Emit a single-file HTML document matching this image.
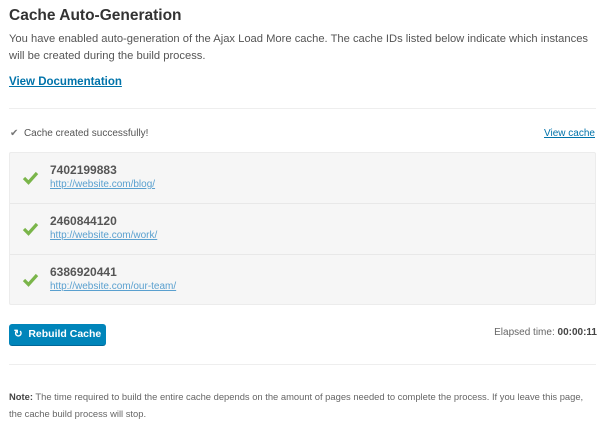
<!DOCTYPE html>
<html><head><style>
body{margin:0;width:606px;height:430px;background:#fff;font-family:"Liberation Sans",sans-serif;color:#444;position:relative;overflow:hidden}
.a{position:absolute;white-space:nowrap}
a{color:#0073aa;text-decoration:underline}
.box{position:absolute;left:9px;top:152px;width:587px;height:153px;background:#f6f6f6;border:1px solid #ececec;border-radius:2px;box-sizing:border-box}
.row{position:absolute;left:0;width:100%;height:51px;border-bottom:1px solid #e8e8e8;box-sizing:border-box}
.row .id{position:absolute;left:40px;top:10px;font-size:12px;font-weight:bold;color:#555}
.row .u{position:absolute;left:40px;top:26px;font-size:10px;color:#5aa0cf}
.row svg{position:absolute;left:12px;top:18px}
hr{position:absolute;left:9px;width:587px;border:0;border-top:1px solid #eee;margin:0}
</style></head><body>
<div class="a" style="left:9px;top:7px;font-size:15.5px;font-weight:bold;color:#333">Cache Auto-Generation</div>
<div class="a" style="left:9px;top:31px;font-size:11.2px;line-height:17px;color:#555">You have enabled auto-generation of the Ajax Load More cache. The cache IDs listed below indicate which instances<br>will be created during the build process.</div>
<div class="a" style="left:9px;top:76px;font-size:11.5px;font-weight:bold"><a>View Documentation</a></div>
<hr style="top:108px">
<div class="a" style="left:10px;top:128px;font-size:10px;color:#555"><span style="color:#777">✔</span>&nbsp; Cache created successfully!</div>
<div class="a" style="right:11px;top:128px;font-size:10px"><a>View cache</a></div>
<div class="box">
<div class="row" style="top:0"><svg width="17" height="14" viewBox="0 0 17 14"><path d="M2 7l4.5 4.5L15 2" fill="none" stroke="#7ab54a" stroke-width="3.2"/></svg><div class="id">7402199883</div><div class="u"><a style="color:#5aa0cf">http://website.com/blog/</a></div></div>
<div class="row" style="top:51px"><svg width="17" height="14" viewBox="0 0 17 14"><path d="M2 7l4.5 4.5L15 2" fill="none" stroke="#7ab54a" stroke-width="3.2"/></svg><div class="id">2460844120</div><div class="u"><a style="color:#5aa0cf">http://website.com/work/</a></div></div>
<div class="row" style="top:102px;border:0"><svg width="17" height="14" viewBox="0 0 17 14"><path d="M2 7l4.5 4.5L15 2" fill="none" stroke="#7ab54a" stroke-width="3.2"/></svg><div class="id">6386920441</div><div class="u"><a style="color:#5aa0cf">http://website.com/our-team/</a></div></div>
</div>
<div class="a" style="left:9px;top:324px;width:97px;height:22px;background:#0085ba;border-radius:3px;border-bottom:1px solid #006799;box-sizing:border-box;color:#fff;font-size:10.5px;font-weight:bold;line-height:21px;text-align:center">↻&nbsp; Rebuild Cache</div>
<div class="a" style="right:9px;top:327px;font-size:10px;color:#666">Elapsed time: <b style="color:#444">00:00:11</b></div>
<hr style="top:364px">
<div class="a" style="left:9px;top:388px;font-size:9.4px;line-height:17px;color:#666"><b style="color:#444">Note:</b> The time required to build the entire cache depends on the amount of pages needed to complete the process. If you leave this page,<br>the cache build process will stop.</div>
</body></html>
